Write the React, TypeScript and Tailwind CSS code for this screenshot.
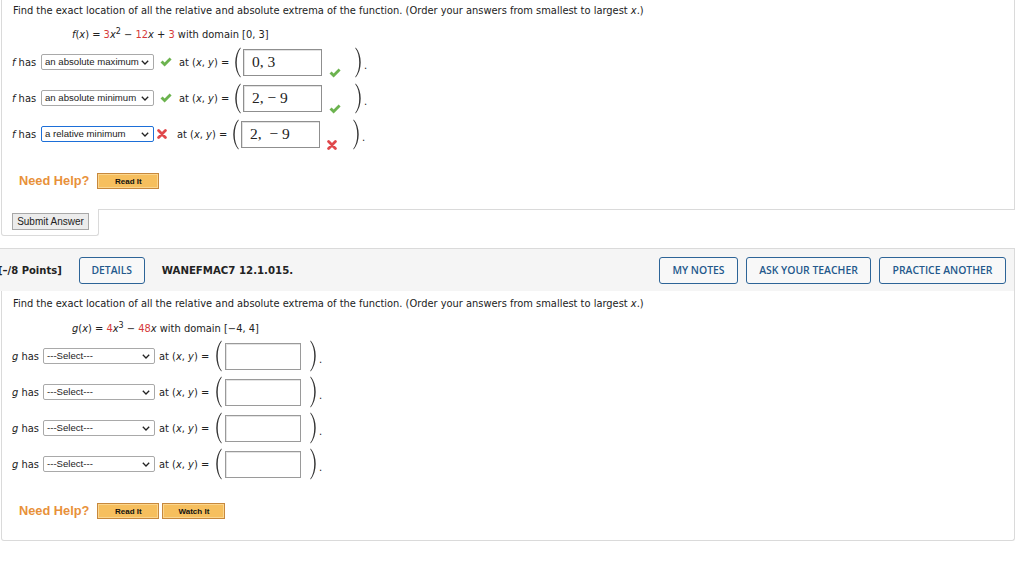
import React from "react";

const Paren = ({ right = false, h = 31 }: { right?: boolean; h?: number }) => (
  <svg width="8" height={h} viewBox={`0 0 8 ${h}`} className="shrink-0" style={right ? { transform: "scaleX(-1)" } : undefined}>
    <path
      d={`M7.3 0.6 C0.6 ${h * 0.25} 0.6 ${h * 0.75} 7.3 ${h - 0.6} L7.7 ${h - 1.2} C2.4 ${h * 0.75} 2.4 ${h * 0.25} 7.7 1.2 Z`}
      fill="#333"
    />
  </svg>
);

const Check = () => (
  <svg width="12" height="10" viewBox="0 0 12 10" className="shrink-0">
    <path d="M0.5 5.4 L2.6 3.4 L4.6 5.4 L9.6 0.4 L11.6 2.4 L4.6 9.4 Z" fill="#6cb34f" />
  </svg>
);

const Cross = () => (
  <svg width="10" height="10" viewBox="0 0 10 10" className="shrink-0">
    <path d="M1.6 1.6 L8.4 8.4 M8.4 1.6 L1.6 8.4" stroke="#e0484b" strokeWidth="2.8" strokeLinecap="round" />
  </svg>
);

const Chevron = () => (
  <svg width="8" height="5" viewBox="0 0 8 5" className="shrink-0">
    <path d="M0.8 0.8 L4 4 L7.2 0.8" stroke="#222" strokeWidth="1.3" fill="none" />
  </svg>
);

const Select = ({ text, w, focus = false }: { text: string; w: string; focus?: boolean }) => (
  <div
    className={`${w} h-[16px] shrink-0 flex items-center justify-between bg-white pl-[3px] pr-[4px] rounded-[2px] overflow-hidden ${
      focus ? "border-[1.5px] border-[#1d6fd8]" : "border border-[#a9a9a9]"
    }`}
    style={{ fontFamily: '"Liberation Sans", Arial, sans-serif' }}
  >
    <span className="text-[9.6px] leading-none text-[#222] whitespace-nowrap">{text}</span>
    <Chevron />
  </div>
);

const AtXY = ({ w }: { w: string }) => (
  <span className={`${w} shrink-0 whitespace-nowrap block`}>
    at (<i>x</i>, <i>y</i>) =
  </span>
);

const MathVal = ({ children }: { children: React.ReactNode }) => (
  <span
    className="text-[15.5px] text-[#222] leading-none whitespace-nowrap"
    style={{ fontFamily: '"Liberation Serif", "Times New Roman", serif' }}
  >
    {children}
  </span>
);

const HelpBtn = ({ label, w }: { label: string; w: string }) => (
  <div
    className={`${w} h-[16px] flex items-center justify-center bg-[#f6bf5e] border border-[#c7883d] shadow-[inset_0_0_0_1px_#fbd68e] text-[8px] font-bold text-[#111]`}
    style={{ fontFamily: '"Liberation Sans", Arial, sans-serif' }}
  >
    {label}
  </div>
);

const NeedHelp = ({ watch = false }: { watch?: boolean }) => (
  <div className="flex items-center h-[16px] pl-[6px]">
    <span
      className="text-[12.8px] font-bold text-[#e8913a] mr-[8px] leading-none"
      style={{ fontFamily: '"Liberation Sans", Arial, sans-serif' }}
    >
      Need Help?
    </span>
    <HelpBtn label="Read It" w="w-[62px]" />
    {watch && (
      <div className="ml-[3px]">
        <HelpBtn label="Watch It" w="w-[63px]" />
      </div>
    )}
  </div>
);

const HeaderBtn = ({ label, w }: { label: string; w: string }) => (
  <div
    className={`${w} h-[27px] flex items-center justify-center border-[1.5px] border-[#2d6497] rounded-[3px] bg-[#f8f8f8] text-[10.4px] text-[#24598c] font-semibold`}
    style={{ fontFamily: '"Open Sans", "DejaVu Sans", sans-serif' }}
  >
    {label}
  </div>
);

type Row1 = { sel: string; focus?: boolean; ok: boolean; val: React.ReactNode };

const rows1: Row1[] = [
  { sel: "an absolute maximum", ok: true, val: "0, 3" },
  { sel: "an absolute minimum", ok: true, val: <>2, − 9</> },
  { sel: "a relative minimum", focus: true, ok: false, val: <>2, &nbsp;− 9</> },
];

export default function App() {
  return (
    <div
      className="w-[1024px] h-[571px] bg-white text-[#222] text-[9.9px] leading-[13px] overflow-hidden"
      style={{ fontFamily: '"DejaVu Sans", Verdana, sans-serif' }}
    >
      {/* Top panel */}
      <div className="ml-[1px] w-[1014px] h-[210px] border-l border-r border-b border-[#dadada] pl-[11px] pt-[4px]">
        <div className="whitespace-nowrap">
          Find the exact location of all the relative and absolute extrema of the function. (Order your answers from
          smallest to largest <i>x</i>.)
        </div>
        <div className="mt-[11px] ml-[59px] whitespace-nowrap">
          <i>f</i>(<i>x</i>) = <span className="text-[#d63a3a]">3</span>
          <i>x</i>
          <sup className="text-[8px] relative -top-[4px]">2</sup> − <span className="text-[#d63a3a]">12</span>
          <i>x</i> + <span className="text-[#d63a3a]">3</span> with domain [0, 3]
        </div>
        <div className="mt-[3px] -ml-[11px]">
          {rows1.map((r, i) => (
            <div key={i} className="h-[36px] flex items-center pl-[10px]">
              <span className="w-[29px] shrink-0 whitespace-nowrap">
                <i>f</i> has
              </span>
              <Select text={r.sel} w="w-[113px]" focus={r.focus} />
              <span className={`w-[22px] shrink-0 flex ${r.ok ? "pl-[6px]" : "pl-[3px]"}`}>{r.ok ? <Check /> : <Cross />}</span>
              <span className={r.ok ? "ml-[3px]" : "ml-[1px]"}>
                <AtXY w="w-[54px]" />
              </span>
              <Paren h={31} />
              <div className="ml-[2px] w-[79px] h-[27px] shrink-0 border border-[#8f8f8f] shadow-[inset_1px_1px_0_#e2e2e2] bg-white flex items-center pl-[8px]">
                <MathVal>{r.val}</MathVal>
              </div>
              <div className="w-[33px] h-[36px] shrink-0 flex items-end justify-start pb-[2px] pl-[7px]">
                {r.ok ? <Check /> : <Cross />}
              </div>
              <Paren right h={31} />
              <span className="ml-[1px] mt-[6px]">.</span>
            </div>
          ))}
        </div>
        <div className="mt-[21px]">
          <NeedHelp />
        </div>
      </div>
      {/* Submit tab */}
      <div className="ml-[1px] -mt-[1px] w-[98px] h-[27px] border-l border-r border-b border-[#dadada] rounded-b-[3px] bg-white relative z-10 pl-[10px] pt-[4px]">
        <div
          className="w-[77px] h-[17px] flex items-center justify-center bg-[#ececec] border border-[#a8a8a8] text-[10px] text-[#222]"
          style={{ fontFamily: '"Liberation Sans", Arial, sans-serif' }}
        >
          Submit Answer
        </div>
      </div>

      {/* Second question header */}
      <div className="mt-[12px] w-[1015px] h-[43px] bg-[#f5f5f5] border-t border-r border-[#dadada] flex items-center">
        <span className="-ml-[2px] font-bold text-[10px] text-[#222] whitespace-nowrap">[–/8 Points]</span>
        <div className="ml-[17px]">
          <HeaderBtn label="DETAILS" w="w-[66px]" />
        </div>
        <span className="ml-[17px] font-bold text-[10.2px] text-[#222] whitespace-nowrap">WANEFMAC7 12.1.015.</span>
        <div className="ml-auto mr-[8px] flex gap-[8px]">
          <HeaderBtn label="MY NOTES" w="w-[79px]" />
          <HeaderBtn label="ASK YOUR TEACHER" w="w-[125px]" />
          <HeaderBtn label="PRACTICE ANOTHER" w="w-[127px]" />
        </div>
      </div>

      {/* Second question body */}
      <div className="ml-[1px] w-[1014px] h-[250px] border-l border-r border-b border-[#dadada] rounded-b-[3px] pl-[11px] pt-[6px]">
        <div className="whitespace-nowrap">
          Find the exact location of all the relative and absolute extrema of the function. (Order your answers from
          smallest to largest <i>x</i>.)
        </div>
        <div className="mt-[12px] ml-[59px] whitespace-nowrap">
          <i>g</i>(<i>x</i>) = <span className="text-[#d63a3a]">4</span>
          <i>x</i>
          <sup className="text-[8px] relative -top-[4px]">3</sup> − <span className="text-[#d63a3a]">48</span>
          <i>x</i> with domain [−4, 4]
        </div>
        <div className="mt-[3px] -ml-[11px]">
          {[0, 1, 2, 3].map((i) => (
            <div key={i} className="h-[36px] flex items-center pl-[10px]">
              <span className="w-[31px] shrink-0 whitespace-nowrap">
                <i>g</i> has
              </span>
              <Select text="---Select---" w="w-[112px]" />
              <span className="ml-[4px]">
                <AtXY w="w-[55px]" />
              </span>
              <Paren h={32} />
              <div className="ml-[3px] w-[76px] h-[27px] shrink-0 border border-[#9a9a9a] shadow-[inset_1px_1px_0_#e4e4e4] bg-white" />
              <span className="ml-[9px] flex">
                <Paren right h={32} />
              </span>
              <span className="ml-[1px] mt-[6px]">.</span>
            </div>
          ))}
        </div>
        <div className="mt-[21px]">
          <NeedHelp watch />
        </div>
      </div>
    </div>
  );
}
